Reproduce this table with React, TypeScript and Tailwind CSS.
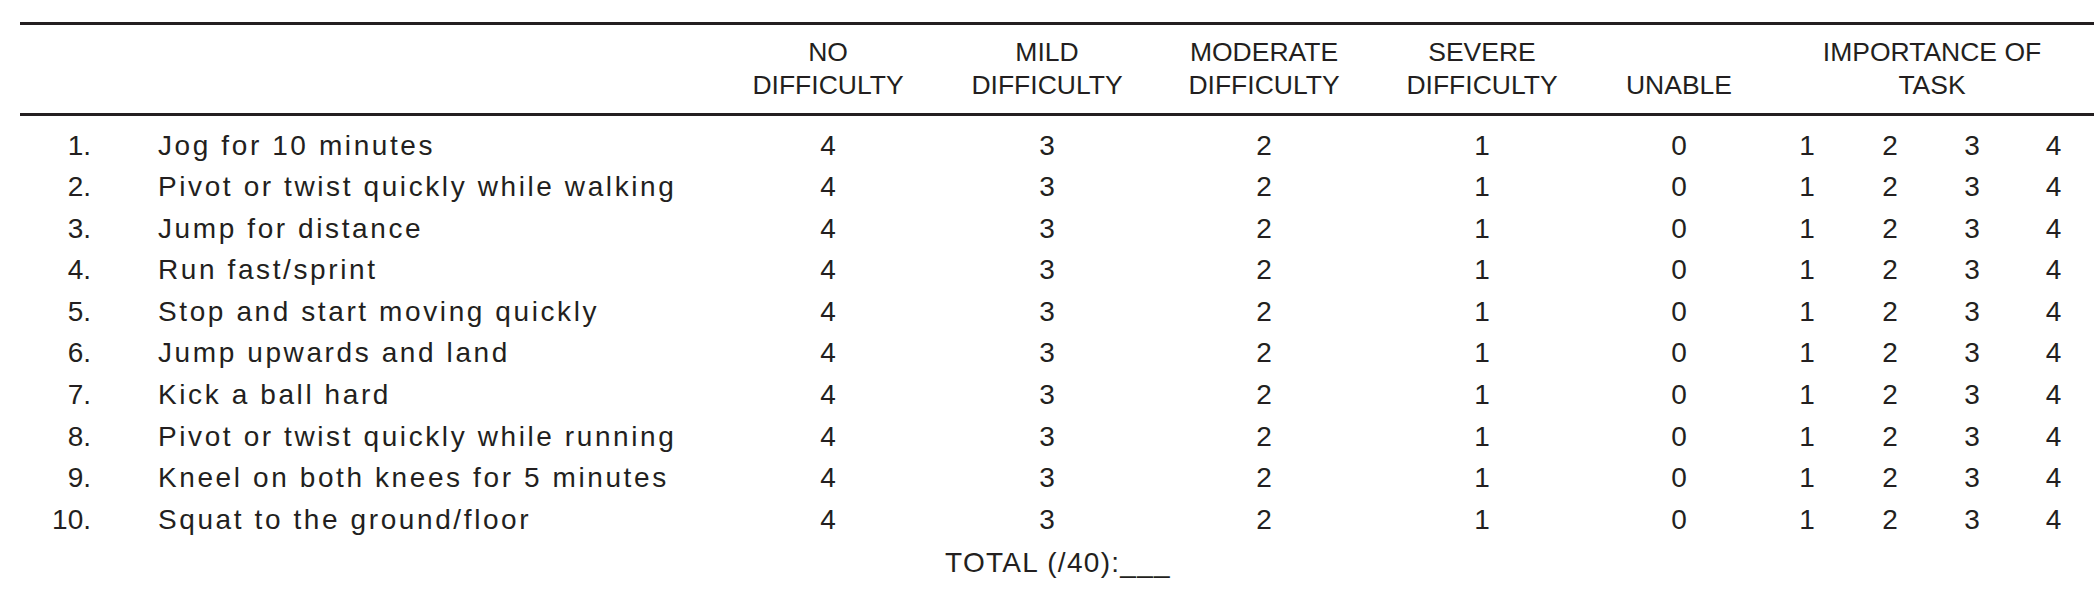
import React from "react";

const tasks = [
  "Jog for 10 minutes",
  "Pivot or twist quickly while walking",
  "Jump for distance",
  "Run fast/sprint",
  "Stop and start moving quickly",
  "Jump upwards and land",
  "Kick a ball hard",
  "Pivot or twist quickly while running",
  "Kneel on both knees for 5 minutes",
  "Squat to the ground/floor",
];

const scores = [4, 3, 2, 1, 0];
const importance = [1, 2, 3, 4];

// fixed column grid so every row lines up with the header
const cols =
  "grid grid-cols-[72px_627px_218px_220px_214px_222px_172px_84px_82px_82px_81px]";

const HeaderCell = ({ lines, span }: { lines: string[]; span?: boolean }) => (
  <div
    className={`flex flex-col items-center justify-end text-center ${
      span ? "col-span-4 pl-[5px]" : ""
    }`}
  >
    {lines.map((l) => (
      <span key={l} className="block whitespace-nowrap">
        {l}
      </span>
    ))}
  </div>
);

export default function App() {
  return (
    <div
      className="w-[2094px] h-[598px] bg-white text-[#231f20] pt-[22px] pl-[20px] overflow-hidden"
      style={{ fontFamily: '"Liberation Sans", Arial, sans-serif' }}
    >
      <div
        className={`${cols} h-[94px] border-t-[3px] border-b-[3px] border-[#231f20] pb-[11px] text-[26.5px] leading-[33px]`}
      >
        <div />
        <div />
        <HeaderCell lines={["NO", "DIFFICULTY"]} />
        <HeaderCell lines={["MILD", "DIFFICULTY"]} />
        <HeaderCell lines={["MODERATE", "DIFFICULTY"]} />
        <HeaderCell lines={["SEVERE", "DIFFICULTY"]} />
        <HeaderCell lines={["UNABLE"]} />
        <HeaderCell lines={["IMPORTANCE OF", "TASK"]} span />
      </div>

      <div className="pt-[8.5px] text-[28px] leading-[41.6px]">
        {tasks.map((t, i) => (
          <div key={t} className={cols}>
            <div className="text-right pr-[1px]">{i + 1}.</div>
            <div className="pl-[66px] tracking-[2.6px] whitespace-nowrap">{t}</div>
            {scores.map((s) => (
              <div key={s} className="text-center">
                {s}
              </div>
            ))}
            {importance.map((n) => (
              <div key={n} className="text-center">
                {n}
              </div>
            ))}
          </div>
        ))}
        <div className={`${cols} mt-[2px]`}>
          <div className="col-start-3 col-span-3 text-center pl-[26px] tracking-[1.3px] whitespace-nowrap">
            TOTAL (/40):___
          </div>
        </div>
      </div>
    </div>
  );
}
